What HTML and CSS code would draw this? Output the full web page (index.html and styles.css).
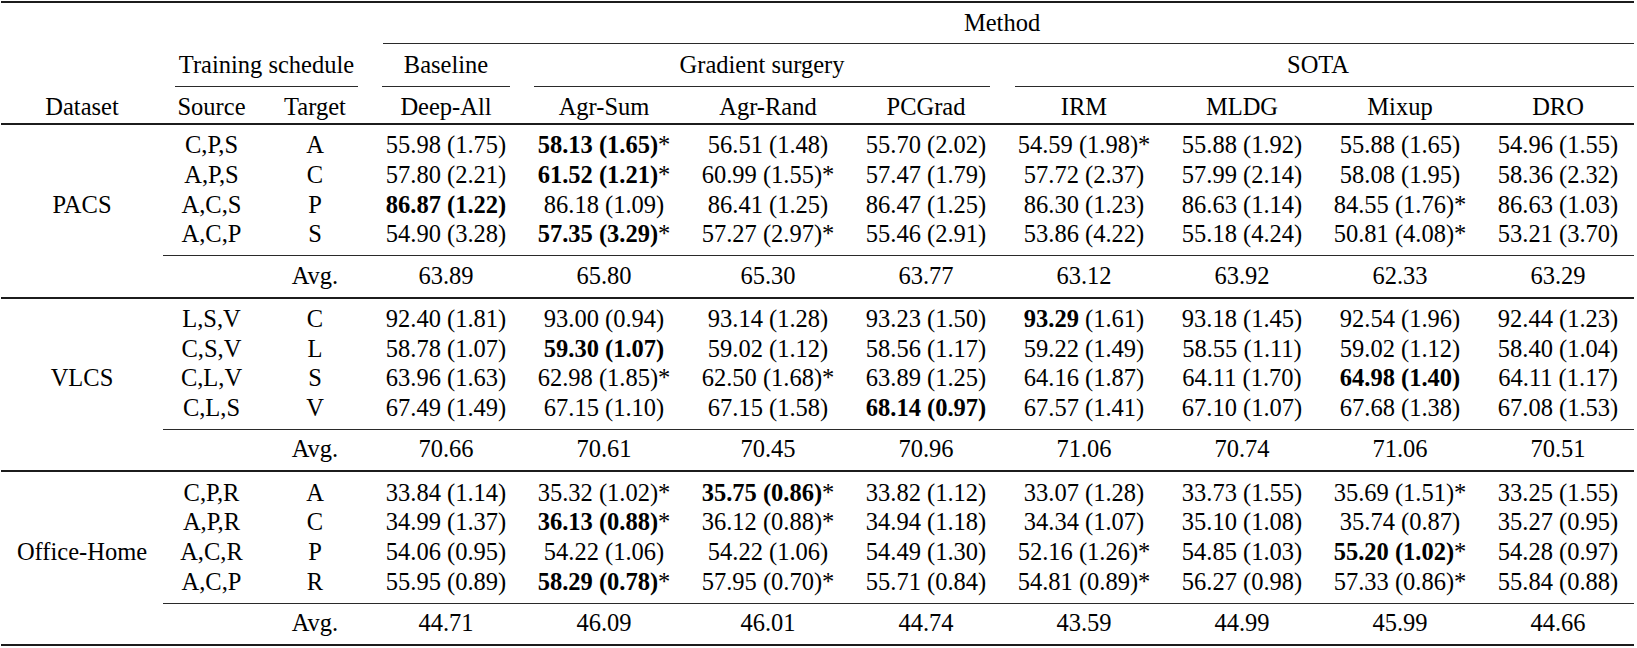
FILE: index.html
```html
<!DOCTYPE html>
<html>
<head>
<meta charset="utf-8">
<link rel="stylesheet" href="styles.css">
</head>
<body>
<table class="results">
  <colgroup>
    <col class="c-ds"><col class="c-src"><col class="c-tgt">
    <col class="c-n"><col class="c-s"><col class="c-s"><col class="c-n">
    <col class="c-s"><col class="c-n"><col class="c-s"><col class="c-n">
  </colgroup>
  <thead>
    <tr class="h1">
      <th></th><th></th><th></th>
      <th colspan="8" class="rule-l">Method</th>
    </tr>
    <tr class="h2">
      <th></th>
      <th colspan="2" class="rule-lr">Training schedule</th>
      <th class="rule-lr">Baseline</th>
      <th colspan="3" class="rule-lr">Gradient surgery</th>
      <th colspan="4" class="rule-l">SOTA</th>
    </tr>
    <tr class="h3">
      <th>Dataset</th><th>Source</th><th>Target</th>
      <th>Deep-All</th><th>Agr-Sum</th><th>Agr-Rand</th><th>PCGrad</th>
      <th>IRM</th><th>MLDG</th><th>Mixup</th><th>DRO</th>
    </tr>
  </thead>
  <tbody>
    <tr class="first">
      <td></td><td>C,P,S</td><td>A</td>
      <td>55.98 (1.75)</td><td><b>58.13 (1.65)</b>*</td><td>56.51 (1.48)</td><td>55.70 (2.02)</td>
      <td>54.59 (1.98)*</td><td>55.88 (1.92)</td><td>55.88 (1.65)</td><td>54.96 (1.55)</td>
    </tr>
    <tr>
      <td></td><td>A,P,S</td><td>C</td>
      <td>57.80 (2.21)</td><td><b>61.52 (1.21)</b>*</td><td>60.99 (1.55)*</td><td>57.47 (1.79)</td>
      <td>57.72 (2.37)</td><td>57.99 (2.14)</td><td>58.08 (1.95)</td><td>58.36 (2.32)</td>
    </tr>
    <tr>
      <td>PACS</td><td>A,C,S</td><td>P</td>
      <td><b>86.87 (1.22)</b></td><td>86.18 (1.09)</td><td>86.41 (1.25)</td><td>86.47 (1.25)</td>
      <td>86.30 (1.23)</td><td>86.63 (1.14)</td><td>84.55 (1.76)*</td><td>86.63 (1.03)</td>
    </tr>
    <tr class="last">
      <td></td><td>A,C,P</td><td>S</td>
      <td>54.90 (3.28)</td><td><b>57.35 (3.29)</b>*</td><td>57.27 (2.97)*</td><td>55.46 (2.91)</td>
      <td>53.86 (4.22)</td><td>55.18 (4.24)</td><td>50.81 (4.08)*</td><td>53.21 (3.70)</td>
    </tr>
    <tr class="avg">
      <td class="blank"></td><td></td><td>Avg.</td>
      <td>63.89</td><td>65.80</td><td>65.30</td><td>63.77</td>
      <td>63.12</td><td>63.92</td><td>62.33</td><td>63.29</td>
    </tr>
  </tbody>
  <tbody>
    <tr class="first">
      <td></td><td>L,S,V</td><td>C</td>
      <td>92.40 (1.81)</td><td>93.00 (0.94)</td><td>93.14 (1.28)</td><td>93.23 (1.50)</td>
      <td><b>93.29</b> (1.61)</td><td>93.18 (1.45)</td><td>92.54 (1.96)</td><td>92.44 (1.23)</td>
    </tr>
    <tr>
      <td></td><td>C,S,V</td><td>L</td>
      <td>58.78 (1.07)</td><td><b>59.30 (1.07)</b></td><td>59.02 (1.12)</td><td>58.56 (1.17)</td>
      <td>59.22 (1.49)</td><td>58.55 (1.11)</td><td>59.02 (1.12)</td><td>58.40 (1.04)</td>
    </tr>
    <tr>
      <td>VLCS</td><td>C,L,V</td><td>S</td>
      <td>63.96 (1.63)</td><td>62.98 (1.85)*</td><td>62.50 (1.68)*</td><td>63.89 (1.25)</td>
      <td>64.16 (1.87)</td><td>64.11 (1.70)</td><td><b>64.98 (1.40)</b></td><td>64.11 (1.17)</td>
    </tr>
    <tr class="last">
      <td></td><td>C,L,S</td><td>V</td>
      <td>67.49 (1.49)</td><td>67.15 (1.10)</td><td>67.15 (1.58)</td><td><b>68.14 (0.97)</b></td>
      <td>67.57 (1.41)</td><td>67.10 (1.07)</td><td>67.68 (1.38)</td><td>67.08 (1.53)</td>
    </tr>
    <tr class="avg">
      <td class="blank"></td><td></td><td>Avg.</td>
      <td>70.66</td><td>70.61</td><td>70.45</td><td>70.96</td>
      <td>71.06</td><td>70.74</td><td>71.06</td><td>70.51</td>
    </tr>
  </tbody>
  <tbody>
    <tr class="first">
      <td></td><td>C,P,R</td><td>A</td>
      <td>33.84 (1.14)</td><td>35.32 (1.02)*</td><td><b>35.75 (0.86)</b>*</td><td>33.82 (1.12)</td>
      <td>33.07 (1.28)</td><td>33.73 (1.55)</td><td>35.69 (1.51)*</td><td>33.25 (1.55)</td>
    </tr>
    <tr>
      <td></td><td>A,P,R</td><td>C</td>
      <td>34.99 (1.37)</td><td><b>36.13 (0.88)</b>*</td><td>36.12 (0.88)*</td><td>34.94 (1.18)</td>
      <td>34.34 (1.07)</td><td>35.10 (1.08)</td><td>35.74 (0.87)</td><td>35.27 (0.95)</td>
    </tr>
    <tr>
      <td>Office-Home</td><td>A,C,R</td><td>P</td>
      <td>54.06 (0.95)</td><td>54.22 (1.06)</td><td>54.22 (1.06)</td><td>54.49 (1.30)</td>
      <td>52.16 (1.26)*</td><td>54.85 (1.03)</td><td><b>55.20 (1.02)</b>*</td><td>54.28 (0.97)</td>
    </tr>
    <tr class="last">
      <td></td><td>A,C,P</td><td>R</td>
      <td>55.95 (0.89)</td><td><b>58.29 (0.78)</b>*</td><td>57.95 (0.70)*</td><td>55.71 (0.84)</td>
      <td>54.81 (0.89)*</td><td>56.27 (0.98)</td><td>57.33 (0.86)*</td><td>55.84 (0.88)</td>
    </tr>
    <tr class="avg">
      <td class="blank"></td><td></td><td>Avg.</td>
      <td>44.71</td><td>46.09</td><td>46.01</td><td>44.74</td>
      <td>43.59</td><td>44.99</td><td>45.99</td><td>44.66</td>
    </tr>
  </tbody>
</table>
</body>
</html>
```

FILE: styles.css
```css
html, body {
  margin: 0;
  padding: 0;
  background: #ffffff;
}

body {
  padding: 1px 0 0 1px;
}

.results {
  width: 1633px;
  table-layout: fixed;
  border-collapse: separate;
  border-spacing: 0;
  border-top: 2px solid #1c1c1c;
  font-family: "Liberation Serif", "Times New Roman", serif;
  font-size: 24.5px;
  line-height: 29.7px;
  color: #000;
}

.c-ds { width: 162px; }
.c-src { width: 97px; }
.c-tgt { width: 110px; }
.c-n { width: 152px; }
.c-s { width: 164px; }

.results th,
.results td {
  padding: 0;
  text-align: center;
  vertical-align: top;
  white-space: nowrap;
  font-weight: normal;
}

.results b {
  font-weight: bold;
}

/* header rows */
.h1 th { padding-top: 5px; padding-bottom: 6.3px; }
.h2 th { padding-top: 6px; padding-bottom: 7.3px; }
.h3 th {
  padding-top: 5.3px;
  padding-bottom: 1px;
  border-bottom: 2px solid #1c1c1c;
}

.rule-l,
.rule-lr {
  background-image: linear-gradient(#2a2a2a, #2a2a2a);
  background-repeat: no-repeat;
}
.rule-l {
  background-size: calc(100% - 13px) 1px;
  background-position: 100% 100%;
}
.rule-lr {
  background-size: calc(100% - 24px) 1px;
  background-position: 50% 100%;
}

/* body groups */
.first td { padding-top: 5.3px; }
.last td { padding-bottom: 6.2px; }

.avg td {
  padding-top: 4.5px;
  padding-bottom: 6.2px;
  border-top: 1px solid #2a2a2a;
  border-bottom: 2px solid #1c1c1c;
}
.avg td.blank {
  border-top-color: transparent;
}
```
